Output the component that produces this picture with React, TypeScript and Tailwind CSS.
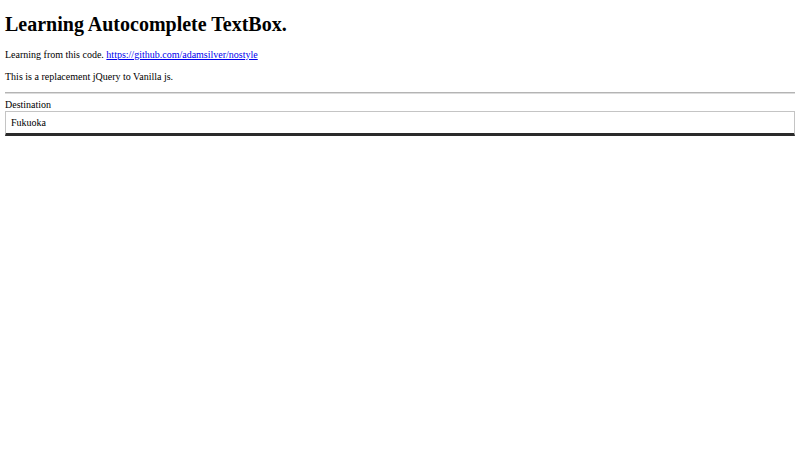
import React from "react";

export default function App() {
  return (
    <div
      className="w-[800px] h-[450px] bg-white text-black px-[5px] pt-[13px] flex flex-col"
      style={{ fontFamily: '"Liberation Serif", "Times New Roman", serif' }}
    >
      <h1 className="text-[20px] leading-[23px] font-bold">Learning Autocomplete TextBox.</h1>
      <p className="mt-[13px] text-[10px] leading-[11.5px]">
        Learning from this code.{" "}
        <a href="#" className="text-[#0000ee] underline">
          https://github.com/adamsilver/nostyle
        </a>
      </p>
      <p className="mt-[10px] text-[10px] leading-[11.5px]">This is a replacement jQuery to Vanilla js.</p>
      <div className="mt-[10px] h-[2px] border-t border-t-[#b4b4b4] border-b border-b-[#dcdcdc]" />
      <label className="mt-[5px] text-[10px] leading-[10px] pt-[0.5px]">Destination</label>
      <div className="mt-[1px] h-[25px] border border-[#c4c4c4] border-b-[3px] border-b-[#2a2a2a] flex items-center pl-[5px] text-[10px]">
        Fukuoka
      </div>
    </div>
  );
}
